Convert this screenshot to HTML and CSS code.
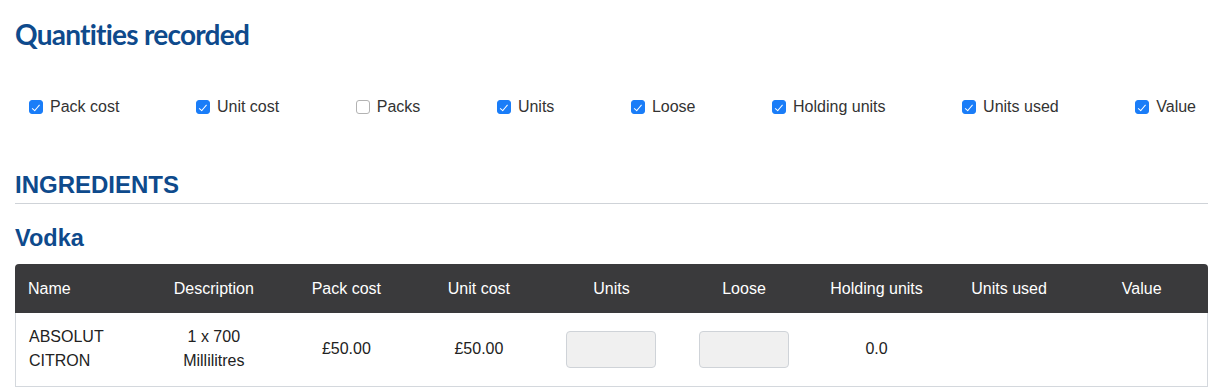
FILE: index.html
```html
<!DOCTYPE html>
<html>
<head>
<meta charset="utf-8">
<link rel="stylesheet" href="styles.css">
</head>
<body>
<div class="page">
  <h1 class="title">Quantities recorded</h1>
  <div class="options">
    <label class="opt"><input type="checkbox" checked><span>Pack cost</span></label>
    <label class="opt"><input type="checkbox" checked><span>Unit cost</span></label>
    <label class="opt"><input type="checkbox"><span>Packs</span></label>
    <label class="opt"><input type="checkbox" checked><span>Units</span></label>
    <label class="opt"><input type="checkbox" checked><span>Loose</span></label>
    <label class="opt"><input type="checkbox" checked><span>Holding units</span></label>
    <label class="opt"><input type="checkbox" checked><span>Units used</span></label>
    <label class="opt"><input type="checkbox" checked><span>Value</span></label>
  </div>
  <h2 class="section">INGREDIENTS</h2>
  <h3 class="group">Vodka</h3>
  <table class="grid">
    <thead>
      <tr>
        <th class="left">Name</th>
        <th>Description</th>
        <th>Pack cost</th>
        <th>Unit cost</th>
        <th>Units</th>
        <th>Loose</th>
        <th>Holding units</th>
        <th>Units used</th>
        <th>Value</th>
      </tr>
    </thead>
    <tbody>
      <tr>
        <td class="left">ABSOLUT CITRON</td>
        <td>1 x 700 Millilitres</td>
        <td>£50.00</td>
        <td>£50.00</td>
        <td><input class="qty" type="text"></td>
        <td><input class="qty" type="text"></td>
        <td>0.0</td>
        <td></td>
        <td></td>
      </tr>
    </tbody>
  </table>
</div>
</body>
</html>
```
FILE: styles.css
```css
html, body {
  margin: 0;
  padding: 0;
  background: #ffffff;
}
.page {
  padding: 0 1px 0 15px;
  font-family: "Liberation Sans", Arial, sans-serif;
  color: #333333;
}
.title {
  margin: 0;
  padding-top: 16px;
  font-family: Lato, "Open Sans", sans-serif;
  font-weight: 700;
  font-size: 28px;
  line-height: 36px;
  color: #0e4a8c;
  letter-spacing: -0.75px;
}
.options {
  display: flex;
  justify-content: space-between;
  padding: 0 12px 0 14px;
  margin-top: 45px;
}
.opt {
  display: flex;
  align-items: center;
  gap: 7px;
  font-size: 16px;
  line-height: 20px;
  color: #333333;
}
.opt input {
  -webkit-appearance: none;
  appearance: none;
  margin: 0;
  width: 14px;
  height: 14px;
  border: 1px solid #b3b3b3;
  border-radius: 3px;
  background: #ffffff;
  position: relative;
  box-sizing: border-box;
}
.opt input:checked {
  background: #1a7df8;
  border-color: #1a7df8;
}
.opt input:checked::after {
  content: "";
  position: absolute;
  left: 4px;
  top: 1.5px;
  width: 3px;
  height: 6.5px;
  border: solid #ffffff;
  border-width: 0 1.6px 1.6px 0;
  transform: rotate(40deg);
}
.section {
  margin: 54px 0 0;
  font-size: 24px;
  line-height: 28px;
  font-weight: 700;
  color: #0e4a8c;
  padding-bottom: 4px;
  border-bottom: 1px solid #cfd3d8;
}
.group {
  margin: 20px 0 0;
  font-size: 23.5px;
  line-height: 28px;
  font-weight: 700;
  color: #0e4a8c;
}
.grid {
  margin-top: 12px;
  width: 100%;
  table-layout: fixed;
  border-collapse: separate;
  border-spacing: 0;
  font-size: 16px;
}
.grid th {
  background: #3a3a3c;
  color: #ffffff;
  font-weight: 400;
  height: 49px;
  padding: 0 8px;
  text-align: center;
}
.grid th:first-child {
  border-top-left-radius: 4px;
}
.grid th:last-child {
  border-top-right-radius: 4px;
}
.grid td {
  padding: 12px 8px 13px;
  line-height: 24px;
  text-align: center;
  color: #222222;
  border-bottom: 1px solid #d4d8dd;
}
.grid td:first-child {
  border-left: 1px solid #d4d8dd;
}
.grid td:last-child {
  border-right: 1px solid #d4d8dd;
}
.grid .left {
  text-align: left;
  padding-left: 13px;
}
.qty {
  display: block;
  margin: 0 auto;
  width: 90px;
  height: 37px;
  box-sizing: border-box;
  border: 1px solid #cfd3d8;
  border-radius: 4px;
  background: #f0f0f0;
}
```
